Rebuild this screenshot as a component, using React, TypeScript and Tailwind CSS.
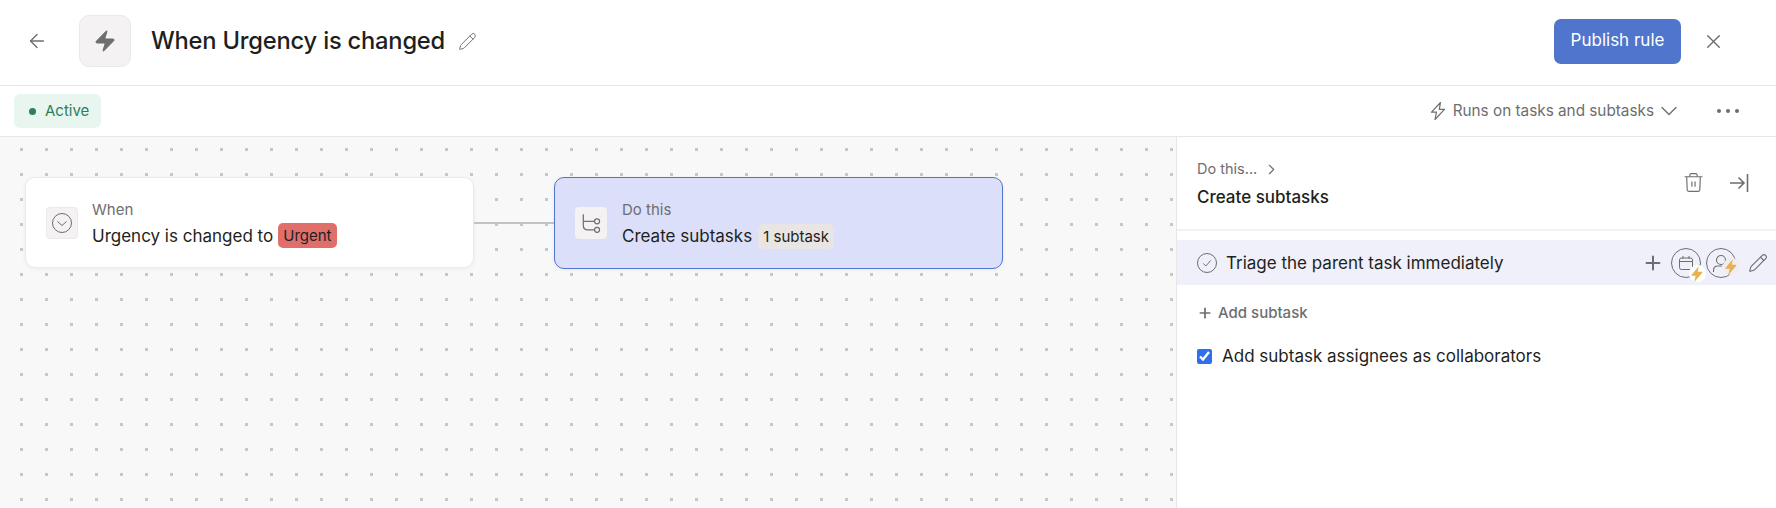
import { ArrowLeft, ChevronDown, ChevronRight, Pencil, Plus, X, Zap } from "lucide-react"

const AmberBolt = ({ className }: { className: string }) => (
  <svg viewBox="0 0 16 16" className={className}>
    <path d="M9.6 1 3.2 8.6c-.3.4 0 .9.4.9h3.2L5.6 15l6.9-8c.3-.4 0-.9-.4-.9H8.7L9.6 1Z" fill="#e8b04f" />
  </svg>
)

const SubtaskIcon = () => (
  <svg viewBox="0 0 20 20" fill="none" stroke="#6d6e6f" strokeWidth="1.1" className="w-[22px] h-[22px]">
    <path d="M3 2v10c0 2.8 1.4 4.2 4.2 4.2h5.8" />
    <path d="M3 8.5h10" />
    <circle cx="15.5" cy="8.5" r="2.3" />
    <circle cx="15.5" cy="16.2" r="2.3" />
  </svg>
)

const RunsBolt = () => (
  <svg viewBox="0 0 16 20" fill="none" stroke="#6d6e6f" strokeWidth="1.2" strokeLinejoin="round" className="w-[16px] h-[20px]">
    <path d="M10.5 1.5 1.5 11.2h5L5 18.5l9.5-10.2h-5.2l1.2-6.8Z" />
  </svg>
)

const CollapseIcon = () => (
  <svg viewBox="0 0 20 20" fill="none" stroke="#6d6e6f" strokeWidth="1.6" className="w-5 h-5">
    <path d="M1 10h13M9.5 4.5 15 10l-5.5 5.5M18.5 1v18" />
  </svg>
)

const TrashIcon = () => (
  <svg viewBox="0 0 20 20" fill="none" stroke="#6d6e6f" strokeWidth="1.1" className="w-[21px] h-[21px]">
    <path d="M1.5 4.5h17M3.5 4.5l.5 12.5c0 1 .6 1.5 1.5 1.5h9c.9 0 1.5-.5 1.5-1.5l.5-12.5" />
    <path d="M6.5 4.5V3c0-1 .6-1.5 1.5-1.5h4c.9 0 1.5.5 1.5 1.5v1.5M8.5 9v5M11.5 9v5" />
  </svg>
)

const RowCheck = () => (
  <svg viewBox="0 0 20 20" fill="none" stroke="#6d6e6f" strokeWidth="1" className="w-5 h-5">
    <circle cx="10" cy="10" r="9.5" />
    <path d="m6.2 10.4 2.6 2.6 5-5.6" />
  </svg>
)

const WhenIcon = () => (
  <svg viewBox="0 0 20 20" fill="none" stroke="#6d6e6f" strokeWidth="1" className="w-5 h-5">
    <circle cx="10" cy="10" r="9.5" />
    <path d="m5.5 8.5 4.5 4 4.5-4" />
  </svg>
)

const Assignee = ({ badge, children }: { badge: string; children: React.ReactNode }) => (
  <div className="relative w-[30px] h-[30px] rounded-full border border-[#6d6e6f] flex items-center justify-center">
    {children}
    <div className={badge}>
      <AmberBolt className="w-[18px] h-[18px] shrink-0" />
    </div>
  </div>
)

export default function App() {
  return (
    <div className="w-[1776px] h-[508px] overflow-hidden flex flex-col bg-white text-[#1e1f21] font-['Inter',sans-serif]">
      <header className="h-[86px] shrink-0 flex items-center border-b border-[#e8e7e7] pl-[26px] pr-[51px] pb-[3px]">
        <ArrowLeft className="w-[22px] h-[22px] text-[#6d6e6f]" strokeWidth={1.5} />
        <div className="ml-[31px] w-[52px] h-[52px] rounded-[10px] bg-[#f4f2f2] border border-[#ebe9e9] flex items-center justify-center">
          <Zap className="w-[24px] h-[24px] text-[#6d6e6f]" fill="#6d6e6f" strokeWidth={1} />
        </div>
        <h1 className="ml-[20px] text-[23.7px] font-medium tracking-[-0.2px]">When Urgency is changed</h1>
        <Pencil className="ml-[13px] w-[19px] h-[19px] text-[#6d6e6f]" strokeWidth={1.2} />
        <button className="ml-auto w-[127px] h-[45px] rounded-[7px] bg-[#4f75cc] text-white text-[17px]">Publish rule</button>
        <X className="ml-[21px] w-[23px] h-[23px] text-[#6d6e6f]" strokeWidth={1.5} />
      </header>

      <div className="h-[51px] shrink-0 flex items-center border-b border-[#e8e7e7] pl-[14px] pr-[37px]">
        <div className="w-[87px] h-[34px] rounded-[6px] bg-[#e8f6ef] flex items-center pl-[15px] gap-[9px] text-[15px] text-[#2f7d5b]">
          <span className="w-[7px] h-[7px] rounded-full bg-[#2f7d5b]" />
          Active
        </div>
        <div className="ml-auto flex items-center text-[#6d6e6f] text-[15.3px]">
          <RunsBolt />
          <span className="ml-[7px]">Runs on tasks and subtasks</span>
          <ChevronDown className="ml-[1px] w-[28px] h-[28px]" strokeWidth={1.2} />
        </div>
        <div className="ml-[34px] flex gap-[5px]">
          <span className="w-[4px] h-[4px] rounded-full bg-[#6d6e6f]" />
          <span className="w-[4px] h-[4px] rounded-full bg-[#6d6e6f]" />
          <span className="w-[4px] h-[4px] rounded-full bg-[#6d6e6f]" />
        </div>
      </div>

      <div className="flex-1 flex min-h-0">
        <div className="w-[1176px] flex items-start pt-[40px] pl-[25px] bg-[#f9f8f8] bg-[radial-gradient(circle,#c8c7c7_1.5px,transparent_1.7px)] bg-[size:25px_25px] bg-[position:9px_0px]">
          <div className="w-[449px] h-[91px] shrink-0 rounded-[10px] bg-white border border-[#edeae9] shadow-[0_1px_4px_rgba(0,0,0,0.06)] flex items-center pl-[20px]">
            <div className="w-[32px] h-[32px] rounded-[4px] bg-[#f4f2f2] border border-[#ebe9e9] flex items-center justify-center">
              <WhenIcon />
            </div>
            <div className="ml-[14px] pt-[2px]">
              <div className="text-[15px] leading-[22px] text-[#6d6e6f]">When</div>
              <div className="flex items-center text-[17px] leading-[26px] mt-[2px]">
                Urgency is changed to
                <span className="ml-[5px] px-[5px] h-[25px] rounded-[5px] bg-[#e06f6c] text-[15px] leading-[25px]">Urgent</span>
              </div>
            </div>
          </div>
          <div className="w-[80px] h-[1.5px] shrink-0 bg-[#c4c3c3] mt-[45px]" />
          <div className="w-[449px] h-[92px] shrink-0 rounded-[10px] bg-[#dcdff9] border border-[#4f75cc] shadow-[0_1px_4px_rgba(0,0,0,0.06)] flex items-center pl-[20px]">
            <div className="w-[32px] h-[32px] rounded-[4px] bg-[#f4f2f2] flex items-center justify-center">
              <SubtaskIcon />
            </div>
            <div className="ml-[15px] pt-[2px]">
              <div className="text-[15px] leading-[22px] text-[#6d6e6f]">Do this</div>
              <div className="flex items-center text-[17px] leading-[26px] mt-[2px]">
                Create subtasks
                <span className="ml-[6px] px-[5px] h-[25px] rounded-[5px] bg-[#e8e5e4] text-[15px] leading-[25px]">1 subtask</span>
              </div>
            </div>
          </div>
        </div>

        <aside className="flex-1 border-l border-[#e8e7e7] flex flex-col">
          <div className="h-[94px] shrink-0 flex items-start pl-[20px] pr-[27px] pt-[21px] border-b-2 border-[#f3f2f2]">
            <div>
              <div className="flex items-center text-[14.5px] leading-[22px] text-[#6d6e6f]">
                Do this...
                <ChevronRight className="ml-[6px] w-[17px] h-[17px]" strokeWidth={1.6} />
              </div>
              <div className="mt-[5px] text-[17px] leading-[24px] font-medium">Create subtasks</div>
            </div>
            <div className="ml-auto flex items-center gap-[25px] pt-[14px]">
              <TrashIcon />
              <CollapseIcon />
            </div>
          </div>
          <div className="mt-[9px] h-[45px] shrink-0 bg-[#f0f0fa] flex items-center pl-[20px] pr-[8px]">
            <RowCheck />
            <span className="ml-[9px] pt-[2px] text-[17px]">Triage the parent task immediately</span>
            <Plus className="ml-auto w-[22px] h-[22px] text-[#6d6e6f]" strokeWidth={2.2} />
            <div className="ml-[7px] flex gap-[5px]">
              <Assignee badge="absolute -right-[5.5px] -bottom-[5.5px] w-[17px] h-[17px] rounded-full bg-white flex items-center justify-center">
                <svg viewBox="0 0 16 16" fill="none" stroke="#6d6e6f" strokeWidth="1" className="w-[16px] h-[16px]">
                  <rect x="1.5" y="3" width="13" height="11.5" rx="2" />
                  <path d="M1.5 6.5h13M5 1v3M11 1v3" />
                </svg>
              </Assignee>
              <Assignee badge="absolute -right-[4.5px] bottom-[1.5px] w-[17px] h-[17px] rounded-full bg-[#efedef] flex items-center justify-center">
                <svg viewBox="0 0 20 20" fill="none" stroke="#6d6e6f" strokeWidth="1.1" className="w-[20px] h-[20px]">
                  <circle cx="10" cy="7" r="4.5" />
                  <path d="M2.5 19v-1.5c0-3 2-4.5 4.5-4.5h4" />
                </svg>
              </Assignee>
            </div>
            <Pencil className="ml-[12px] w-[20px] h-[20px] text-[#6d6e6f]" strokeWidth={1.3} />
          </div>
          <div className="mt-[18px] pl-[20px] flex items-center text-[15px] leading-[20px] font-medium text-[#6d6e6f]">
            <Plus className="w-[16px] h-[16px]" strokeWidth={2.6} />
            <span className="ml-[5px]">Add subtask</span>
          </div>
          <label className="mt-[20px] pl-[20px] flex items-center text-[17px] leading-[26px]">
            <input type="checkbox" defaultChecked className="w-[15px] h-[15px] accent-[#2f6fed]" />
            <span className="ml-[10px]">Add subtask assignees as collaborators</span>
          </label>
        </aside>
      </div>
    </div>
  )
}
